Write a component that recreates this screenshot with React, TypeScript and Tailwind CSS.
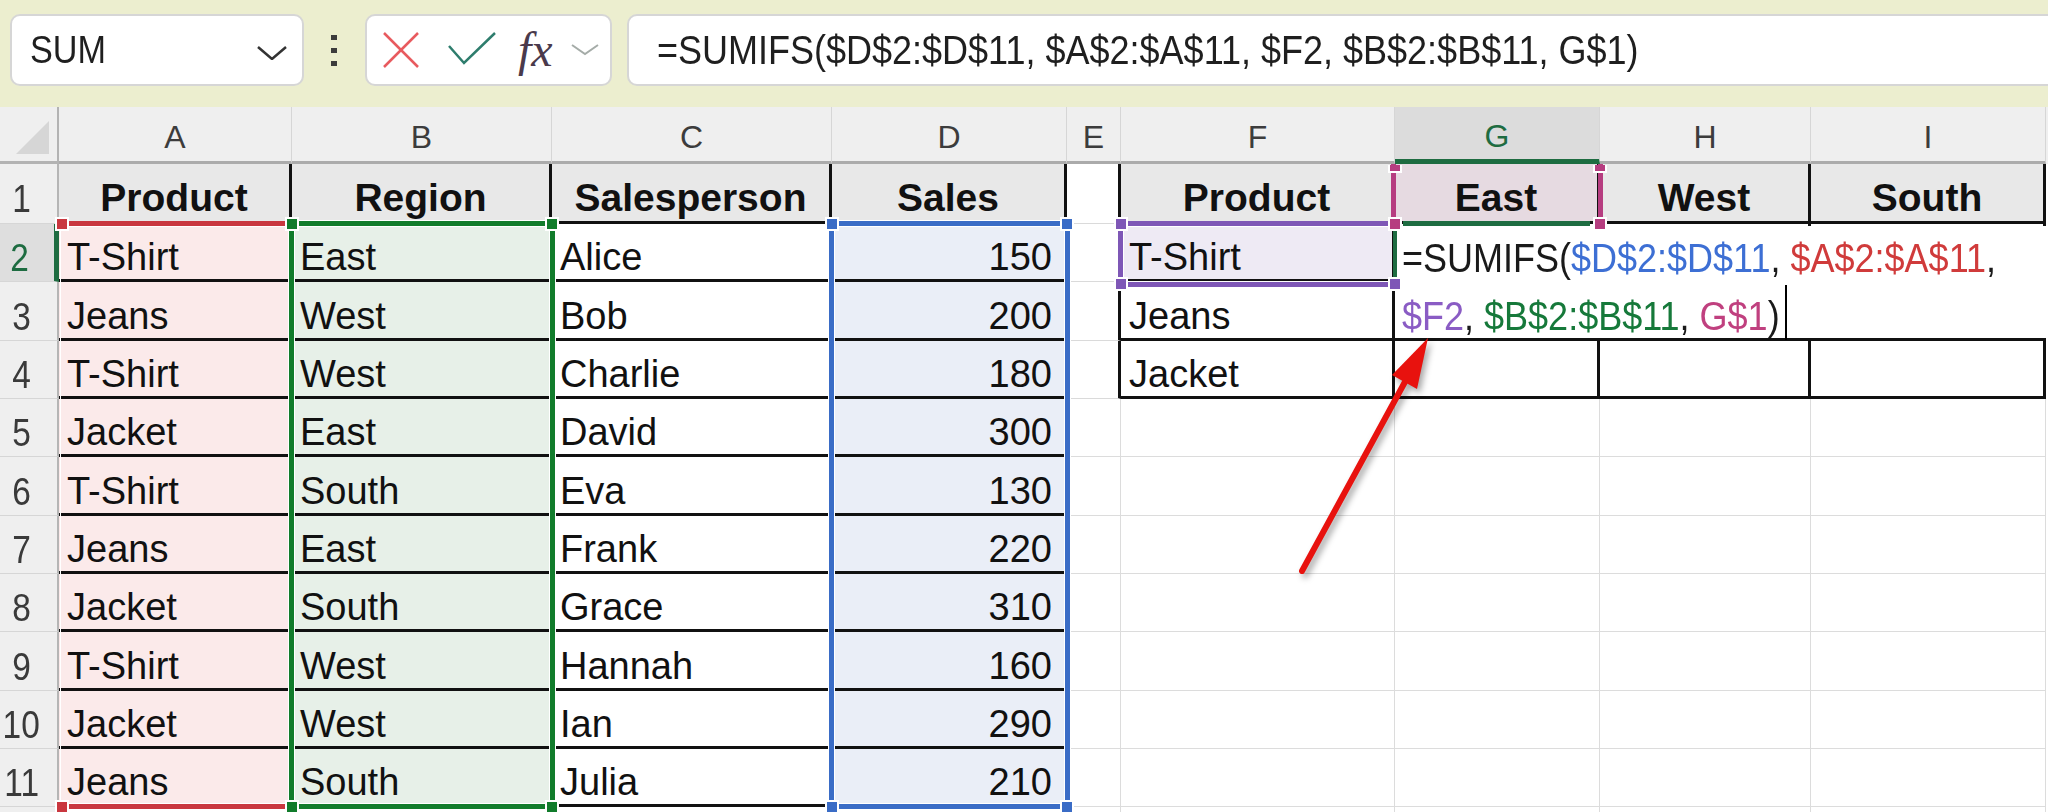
import clsx from "clsx";

const COLUMNS = [
  { key: "A", width: "w-[233px]" },
  { key: "B", width: "w-[260px]" },
  { key: "C", width: "w-[280px]" },
  { key: "D", width: "w-[235px]" },
  { key: "E", width: "w-[54px]" },
  { key: "F", width: "w-[274px]" },
  { key: "G", width: "w-[205px]" },
  { key: "H", width: "w-[211px]" },
  { key: "I", width: "w-[235px]" },
];

const ROWS: { height: string; cells: string[] }[] = [
  { height: "h-[60px]", cells: ["Product", "Region", "Salesperson", "Sales", "", "Product", "East", "West", "South"] },
  { height: "h-[58px]", cells: ["T-Shirt", "East", "Alice", "150", "", "T-Shirt"] },
  { height: "h-[59px]", cells: ["Jeans", "West", "Bob", "200", "", "Jeans"] },
  { height: "h-[58px]", cells: ["T-Shirt", "West", "Charlie", "180", "", "Jacket"] },
  { height: "h-[58px]", cells: ["Jacket", "East", "David", "300"] },
  { height: "h-[59px]", cells: ["T-Shirt", "South", "Eva", "130"] },
  { height: "h-[58px]", cells: ["Jeans", "East", "Frank", "220"] },
  { height: "h-[58px]", cells: ["Jacket", "South", "Grace", "310"] },
  { height: "h-[59px]", cells: ["T-Shirt", "West", "Hannah", "160"] },
  { height: "h-[58px]", cells: ["Jacket", "West", "Ian", "290"] },
  { height: "h-[58px]", cells: ["Jeans", "South", "Julia", "210"] },
  { height: "h-[30px]", cells: [] },
];

const DARK = "text-[#1a1a1a]";

const FORMULA_LINE_1: [string, string][] = [
  ["=SUMIFS(", DARK],
  ["$D$2:$D$11", "text-[#3d6fd4]"],
  [", ", DARK],
  ["$A$2:$A$11", "text-[#d03b3b]"],
  [",", DARK],
];

const FORMULA_LINE_2: [string, string][] = [
  ["$F2", "text-[#8a5cc4]"],
  [", ", DARK],
  ["$B$2:$B$11", "text-[#16793a]"],
  [", ", DARK],
  ["G$1", "text-[#c0407f]"],
  [")", DARK],
];

const HANDLES: { x: number; y: number; color: string }[] = [
  { x: 62, y: 224, color: "bg-[#c9373f]" },
  { x: 62, y: 807, color: "bg-[#c9373f]" },
  { x: 292, y: 224, color: "bg-[#117c2b]" },
  { x: 552, y: 224, color: "bg-[#117c2b]" },
  { x: 292, y: 807, color: "bg-[#117c2b]" },
  { x: 552, y: 807, color: "bg-[#117c2b]" },
  { x: 832, y: 224, color: "bg-[#3a6cc6]" },
  { x: 1067, y: 224, color: "bg-[#3a6cc6]" },
  { x: 832, y: 807, color: "bg-[#3a6cc6]" },
  { x: 1067, y: 807, color: "bg-[#3a6cc6]" },
  { x: 1121, y: 224, color: "bg-[#7e57b6]" },
  { x: 1121, y: 284, color: "bg-[#7e57b6]" },
  { x: 1395, y: 284, color: "bg-[#7e57b6]" },
  { x: 1395, y: 224, color: "bg-[#b63d80]" },
  { x: 1600, y: 224, color: "bg-[#b63d80]" },
];

function cellBorder(row: number, col: number) {
  const salesTable = col <= 3 && row <= 11;
  const lookupTable = col >= 5 && row <= 4;
  if (salesTable || lookupTable) return "border-b-[3px] border-r-[3px] border-[#111]";
  if (col === 4 && row <= 4) return "border-b border-r-[3px] border-b-[#dadada] border-r-[#111]";
  return "border-b border-r border-[#dcdcdc]";
}

function cellBackground(row: number, col: number) {
  if (row === 1 && col === 6) return "bg-[#e6dae1]";
  if (row === 1 && col !== 4) return "bg-[#e8e8e8]";
  if (row === 2 && col === 5) return "bg-[#eeeaf4]";
  if (row >= 2 && row <= 11) {
    if (col === 0) return "bg-[#fbeaea]";
    if (col === 1) return "bg-[#e7f0e8]";
    if (col === 3) return "bg-[#eaeef7]";
  }
  return "bg-white";
}

function cellText(row: number, col: number) {
  if (row === 1) return "justify-center pt-[12px] text-[39px] font-bold";
  if (col === 3) return "justify-end pr-[12px] pt-[12px] text-[38px]";
  return "pl-[8px] pt-[12px] text-[38px]";
}

function Toolbar() {
  return (
    <div className="flex h-[107px] items-start bg-[#eceecf] pl-[10px] pt-[14px]">
      <div className="flex h-[72px] w-[294px] shrink-0 items-center justify-between rounded-[10px] border-2 border-[#d6d6d6] bg-white pl-[18px] pr-[15px]">
        <span className="origin-left scale-x-[0.9] text-[38px] text-[#1f1f1f]">SUM</span>
        <svg className="mt-[6px]" width="30" height="14" viewBox="0 0 30 14">
          <polyline points="1,1 15,13 29,1" fill="none" stroke="#333" strokeWidth="2.5" />
        </svg>
      </div>

      <div className="ml-[27px] flex shrink-0 flex-col gap-[8px] pt-[21px]">
        <span className="h-[5px] w-[6px] bg-[#3c3c3c]" />
        <span className="h-[5px] w-[6px] bg-[#3c3c3c]" />
        <span className="h-[5px] w-[6px] bg-[#3c3c3c]" />
      </div>

      <div className="ml-[28px] flex h-[72px] w-[247px] shrink-0 items-center rounded-[10px] border-2 border-[#d6d6d6] bg-white pl-[16px]">
        <svg width="36" height="36" viewBox="0 0 36 36">
          <line x1="1" y1="1" x2="35" y2="35" stroke="#e85a5e" strokeWidth="2.5" />
          <line x1="35" y1="1" x2="1" y2="35" stroke="#e85a5e" strokeWidth="2.5" />
        </svg>
        <svg className="-mt-[4px] ml-[29px]" width="48" height="33" viewBox="0 0 48 33">
          <polyline points="1,14 16,31 47,1" fill="none" stroke="#2e7d6d" strokeWidth="2.5" />
        </svg>
        <span className="ml-[22px] font-['Liberation_Serif',serif] text-[48px] italic leading-none text-[#4a3a4c]">
          fx
        </span>
        <svg className="ml-[18px]" width="28" height="12" viewBox="0 0 28 12">
          <polyline points="1,1 14,10 27,1" fill="none" stroke="#a5aca8" strokeWidth="2" />
        </svg>
      </div>

      <div className="ml-[15px] flex h-[72px] w-[1500px] shrink-0 items-center rounded-[10px] border-2 border-[#d6d6d6] bg-white pl-[28px]">
        <span className="origin-left scale-x-[0.9] whitespace-pre text-[40px] text-[#1f1f1f]">
          =SUMIFS($D$2:$D$11, $A$2:$A$11, $F2, $B$2:$B$11, G$1)
        </span>
      </div>
    </div>
  );
}

function ColumnHeaders() {
  return (
    <div className="flex h-[57px] bg-[#efefef]">
      <div className="h-full w-[59px] shrink-0 border-b-[3px] border-r-2 border-[#b3b3b3]">
        <svg width="57" height="54" viewBox="0 0 57 54">
          <polygon points="16,47 49,47 49,14" fill="#d6d6d6" />
        </svg>
      </div>
      {COLUMNS.map((column) => (
        <div
          key={column.key}
          className={clsx(
            column.width,
            "flex h-full shrink-0 items-center justify-center border-r border-r-[#d6d6d6] pt-[5px] text-[32px]",
            column.key === "G"
              ? "border-b-[5px] border-b-[#1e6c41] bg-[#dcdcdc] text-[#1e6c41]"
              : "border-b-[3px] border-b-[#ababab] text-[#3c3c3c]"
          )}
        >
          {column.key}
        </div>
      ))}
    </div>
  );
}

function Handle({ x, y, color }: { x: number; y: number; color: string }) {
  return (
    <div
      className={clsx("absolute h-[14px] w-[14px] border-2 border-white", color)}
      style={{ left: x - 7, top: y - 7 }}
    />
  );
}

function Overlays() {
  return (
    <>
      {/* referenced ranges */}
      <div className="absolute left-[60px] top-[221px] h-[588px] w-[234px] border-y-[5px] border-[#c9373f] shadow-[inset_0_0_0_1px_#fff]" />
      <div className="absolute left-[289px] top-[221px] h-[588px] w-[266px] border-[5px] border-[#117c2b] shadow-[0_0_0_1px_#fff,inset_0_0_0_1px_#fff]" />
      <div className="absolute left-[829px] top-[221px] h-[588px] w-[241px] border-[5px] border-[#3a6cc6] shadow-[0_0_0_1px_#fff,inset_0_0_0_1px_#fff]" />
      <div className="absolute left-[1118px] top-[221px] h-[66px] w-[278px] border-y-[5px] border-l-[5px] border-[#7e57b6] shadow-[inset_0_0_0_1px_#fff]" />
      <div className="absolute left-[1391px] top-[164px] h-[62px] w-[212px] border-x-[5px] border-[#b63d80]" />
      <div className="absolute left-[1388px] top-[165px] h-[8px] w-[14px] border-2 border-t-0 border-white bg-[#b63d80]" />
      <div className="absolute left-[1593px] top-[165px] h-[8px] w-[14px] border-2 border-t-0 border-white bg-[#b63d80]" />

      {/* in-cell editor */}
      <div className="absolute left-[1397px] top-[226px] h-[112px] w-[649px] bg-white pl-[5px] pt-[3px]">
        <div className="origin-left scale-x-[0.9] whitespace-pre text-[40px] leading-[58px]">
          <div>
            {FORMULA_LINE_1.map(([text, color], i) => (
              <span key={i} className={color}>
                {text}
              </span>
            ))}
          </div>
          <div>
            {FORMULA_LINE_2.map(([text, color], i) => (
              <span key={i} className={color}>
                {text}
              </span>
            ))}
          </div>
        </div>
      </div>
      <div className="absolute left-[1785px] top-[285px] h-[55px] w-[2px] bg-black" />

      {/* active cell */}
      <div className="absolute left-[1403px] top-[221px] h-[5px] w-[187px] bg-[#1e6c41]" />
      <div className="absolute left-[1393px] top-[230px] h-[48px] w-[4px] bg-[#1e6c41]" />

      {HANDLES.map((h, i) => (
        <Handle key={i} x={h.x} y={h.y} color={h.color} />
      ))}

      <svg
        className="pointer-events-none absolute left-[1280px] top-[320px] drop-shadow-[3px_4px_3px_rgba(0,0,0,0.35)]"
        width="180"
        height="270"
        viewBox="0 0 180 270"
      >
        <line x1="22" y1="251" x2="126" y2="60" stroke="#e8120e" strokeWidth="6" strokeLinecap="round" />
        <polygon points="148,18 137,69 112,55" fill="#e8120e" />
      </svg>
    </>
  );
}

export default function App() {
  return (
    <div className="relative h-[812px] w-[2048px] overflow-hidden bg-white font-['Liberation_Sans',Arial,sans-serif] text-[#111]">
      <Toolbar />
      <ColumnHeaders />
      {ROWS.map((row, r) => {
        const rowNumber = r + 1;
        const active = rowNumber === 2;
        return (
          <div key={rowNumber} className={clsx("flex", row.height)}>
            <div
              className={clsx(
                "flex h-full w-[59px] shrink-0 items-center justify-center border-b border-b-[#d6d6d6] pr-[14px] pt-[12px] text-[38px]",
                active
                  ? "border-r-[5px] border-r-[#1e6c41] bg-[#dedede] text-[#1e6c41]"
                  : "border-r-2 border-r-[#b5b5b5] bg-[#efefef] text-[#3a3a3a]"
              )}
            >
              {rowNumber <= 11 && <span className="scale-x-[0.88]">{rowNumber}</span>}
            </div>
            {COLUMNS.map((column, c) => (
              <div
                key={column.key}
                className={clsx(
                  column.width,
                  "flex h-full shrink-0 items-center whitespace-nowrap",
                  cellBorder(rowNumber, c),
                  cellBackground(rowNumber, c),
                  cellText(rowNumber, c)
                )}
              >
                {row.cells[c] ?? ""}
              </div>
            ))}
          </div>
        );
      })}
      <Overlays />
    </div>
  );
}
